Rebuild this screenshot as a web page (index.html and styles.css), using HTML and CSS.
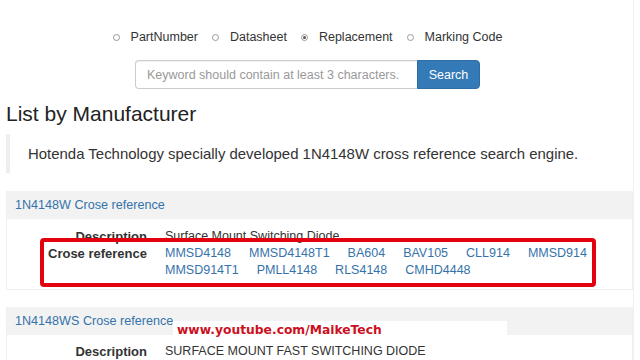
FILE: index.html
```html
<!DOCTYPE html>
<html lang="en">
<head>
    <meta charset="UTF-8">
    <meta name="viewport" content="width=device-width, initial-scale=1.0">
    <title>1N4148W Cross Reference</title>
    <link rel="stylesheet" href="styles.css">
</head>
<body>
    <div class="page">
        <div class="search">
            <div class="modes">
                <label class="mode"><span class="radio"></span>PartNumber</label>
                <label class="mode"><span class="radio"></span>Datasheet</label>
                <label class="mode"><span class="radio checked"></span>Replacement</label>
                <label class="mode"><span class="radio"></span>Marking Code</label>
            </div>
            <form class="search-form">
                <input type="text" placeholder="Keyword should contain at least 3 characters.">
                <button type="button">Search</button>
            </form>
        </div>

        <h2>List by Manufacturer</h2>
        <blockquote>Hotenda Technology specially developed 1N4148W cross reference search engine.</blockquote>

        <div class="panel">
            <div class="panel-heading"><a href="#">1N4148W Crose reference</a></div>
            <div class="panel-body">
                <div class="row">
                    <div class="label">Description</div>
                    <div class="value">Surface Mount Switching Diode</div>
                </div>
                <div class="row">
                    <div class="label">Crose reference</div>
                    <div class="value links">
                        <a href="#">MMSD4148</a>
                        <a href="#">MMSD4148T1</a>
                        <a href="#">BA604</a>
                        <a href="#">BAV105</a>
                        <a href="#">CLL914</a>
                        <a href="#">MMSD914</a>
                        <a href="#">MMSD914T1</a>
                        <a href="#">PMLL4148</a>
                        <a href="#">RLS4148</a>
                        <a href="#">CMHD4448</a>
                    </div>
                </div>
                <div class="highlight"></div>
            </div>
        </div>

        <div class="panel">
            <div class="panel-heading"><a href="#">1N4148WS Crose reference</a></div>
            <div class="panel-body">
                <div class="row">
                    <div class="label">Description</div>
                    <div class="value">SURFACE MOUNT FAST SWITCHING DIODE</div>
                </div>
            </div>
            <div class="watermark">www.youtube.com/MaikeTech</div>
        </div>
    </div>
</body>
</html>
```

FILE: styles.css
```css
body {
    margin: 0;
    font-family: "Liberation Sans", Arial, sans-serif;
    color: #333;
    background: #fff;
    overflow: hidden;
}
a {
    color: #3572aa;
    text-decoration: none;
}
.page {
    margin: 0 6px;
    border-right: 1px solid #f0f0f0;
}
.search {
    padding: 28px 24px 0 0;
}
.modes {
    display: flex;
    justify-content: center;
    gap: 14px;
    font-size: 12.5px;
    line-height: 18px;
}
.mode {
    display: flex;
    align-items: center;
    gap: 11px;
}
.radio {
    width: 5px;
    height: 5px;
    border: 1px solid #999;
    border-radius: 50%;
    background: #fff;
    position: relative;
}
.radio.checked::after {
    content: "";
    position: absolute;
    left: 1px;
    top: 1px;
    width: 3px;
    height: 3px;
    border-radius: 50%;
    background: #555;
}
.search-form {
    display: flex;
    justify-content: center;
    margin: 14px 0 0;
}
.search-form input {
    width: 282px;
    height: 29px;
    box-sizing: border-box;
    padding: 0 11px;
    border: 1px solid #ccc;
    border-right: none;
    border-radius: 4px 0 0 4px;
    font-family: inherit;
    font-size: 12.5px;
    color: #555;
    box-shadow: inset 0 1px 1px rgba(0,0,0,0.06);
}
.search-form input::placeholder {
    color: #999;
}
.search-form button {
    width: 63px;
    height: 29px;
    border: 1px solid #2e6da4;
    border-radius: 0 4px 4px 0;
    background: #337ab7;
    color: #fff;
    font-family: inherit;
    font-size: 12.5px;
}
h2 {
    margin: 13px 0 0;
    font-size: 21px;
    font-weight: normal;
    line-height: 24px;
    color: #222;
}
blockquote {
    margin: 8px 0 0;
    padding: 10px 19px 10px 18px;
    border-left: 4px solid #eee;
    font-size: 14.95px;
    line-height: 19px;
}
.panel {
    position: relative;
    margin-top: 18px;
    border: 1px solid #f0f0f0;
    border-top: none;
}
.panel + .panel {
    margin-top: 17px;
}
.panel-heading {
    height: 28px;
    padding: 0 8px;
    background: #f2f2f2;
    font-size: 12.6px;
    line-height: 28px;
}
.panel-body {
    position: relative;
    padding: 9px 0 10px;
}
.panel + .panel .panel-body {
    padding-top: 8px;
}
.row {
    display: grid;
    grid-template-columns: 140px 1fr;
    column-gap: 18px;
    font-size: 12.5px;
    line-height: 17px;
}
.label {
    text-align: right;
    font-weight: bold;
    font-size: 13px;
}
.links {
    display: flex;
    flex-wrap: wrap;
    column-gap: 18px;
    padding-right: 30px;
}
.highlight {
    position: absolute;
    left: 33px;
    top: 19px;
    width: 548px;
    height: 41px;
    border: 4px solid #e3000f;
    border-radius: 4px;
}
.watermark {
    position: absolute;
    left: 166px;
    top: 14px;
    width: 330px;
    height: 19px;
    padding-left: 4px;
    background: #fff;
    font-family: "DejaVu Sans", Verdana, sans-serif;
    font-weight: bold;
    font-size: 12.3px;
    line-height: 19px;
    color: #cc1022;
}
```
